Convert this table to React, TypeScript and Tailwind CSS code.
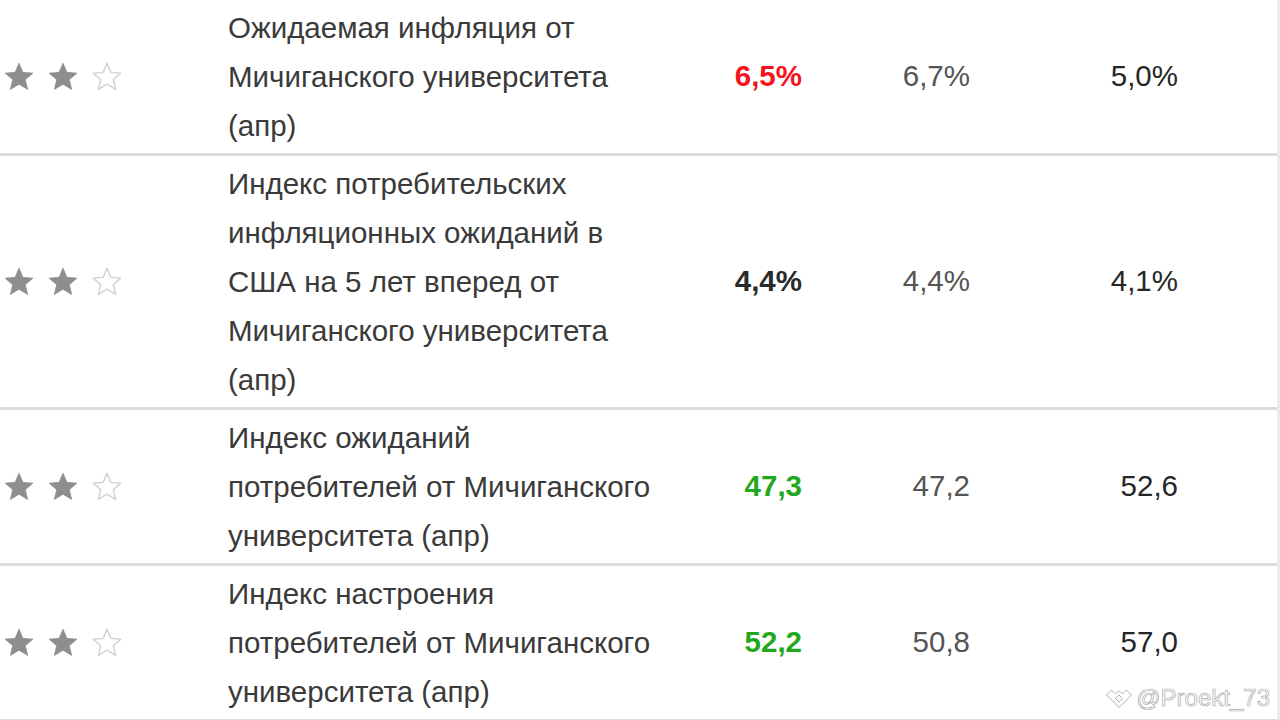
import React from "react";

interface Row {
  lines: string[];
  actual: string;
  actualTone: "red" | "green" | "neutral";
  forecast: string;
  previous: string;
}

const rows: Row[] = [
  {
    lines: ["Ожидаемая инфляция от", "Мичиганского университета", "(апр)"],
    actual: "6,5%",
    actualTone: "red",
    forecast: "6,7%",
    previous: "5,0%",
  },
  {
    lines: [
      "Индекс потребительских",
      "инфляционных ожиданий в",
      "США на 5 лет вперед от",
      "Мичиганского университета",
      "(апр)",
    ],
    actual: "4,4%",
    actualTone: "neutral",
    forecast: "4,4%",
    previous: "4,1%",
  },
  {
    lines: ["Индекс ожиданий", "потребителей от Мичиганского", "университета (апр)"],
    actual: "47,3",
    actualTone: "green",
    forecast: "47,2",
    previous: "52,6",
  },
  {
    lines: ["Индекс настроения", "потребителей от Мичиганского", "университета (апр)"],
    actual: "52,2",
    actualTone: "green",
    forecast: "50,8",
    previous: "57,0",
  },
];

const toneClass = {
  red: "text-[#f5141e]",
  green: "text-[#22a81e]",
  neutral: "text-[#2a2a2a]",
};

const Star = ({ filled }: { filled: boolean }) => (
  <svg width="32" height="31" viewBox="0 0 24 23">
    <polygon
      points="12,1.5 14.9,8.4 22.4,9 16.7,13.9 18.5,21.2 12,17.3 5.5,21.2 7.3,13.9 1.6,9 9.1,8.4"
      fill={filled ? "#8e8e8e" : "#ffffff"}
      stroke={filled ? "#8e8e8e" : "#d2d2d2"}
      strokeWidth={filled ? 0.6 : 1.1}
      strokeLinejoin="round"
    />
  </svg>
);

const Watermark = () => (
  <div className="absolute right-[10px] bottom-[10px] flex items-center gap-[3px] pointer-events-none select-none">
    <svg width="28" height="24" viewBox="0 0 28 24" fill="none" stroke="#b0b0b0" strokeWidth="1" strokeLinejoin="round">
      <path d="M1.5 9 L6.5 4 L10.5 8 L14 4.5 L17.5 8 L21.5 4 L26.5 9" />
      <path d="M1.5 9 L14 21.5 L26.5 9" />
      <path d="M10.5 12.5 L14 9 L17.5 12.5 L14 16 Z" />
    </svg>
    <span className="text-[24px] leading-none text-white [-webkit-text-stroke:0.7px_#aaaaaa] font-['Liberation_Sans',Arial,sans-serif]">
      @Proekt_73
    </span>
  </div>
);

export default function App() {
  return (
    <div className="relative w-[1280px] h-[720px] overflow-hidden bg-white font-['Liberation_Sans',Arial,sans-serif]">
      <div className="absolute top-0 right-0 w-[3px] h-full bg-[#ececec]" />
      <div className="flex flex-col">
        {rows.map((row, i) => (
          <div
            key={i}
            className="grid grid-cols-[228px_460px_114px_168px_208px_1fr] items-center border-b-[3px] border-[#dcdcdc] py-[3px]"
          >
            <div className="flex items-center gap-[12px] pl-[3px]">
              <Star filled />
              <Star filled />
              <Star filled={false} />
            </div>
            <div className="text-[29.5px] leading-[49px] text-[#3a3a3a]">
              {row.lines.map((l, j) => (
                <div key={j} className="whitespace-nowrap">{l}</div>
              ))}
            </div>
            <div className={`text-right text-[29.5px] font-bold ${toneClass[row.actualTone]}`}>
              {row.actual}
            </div>
            <div className="text-right text-[29.5px] text-[#555555]">{row.forecast}</div>
            <div className="text-right text-[29.5px] text-[#262626]">{row.previous}</div>
            <div />
          </div>
        ))}
      </div>
      <Watermark />
    </div>
  );
}
